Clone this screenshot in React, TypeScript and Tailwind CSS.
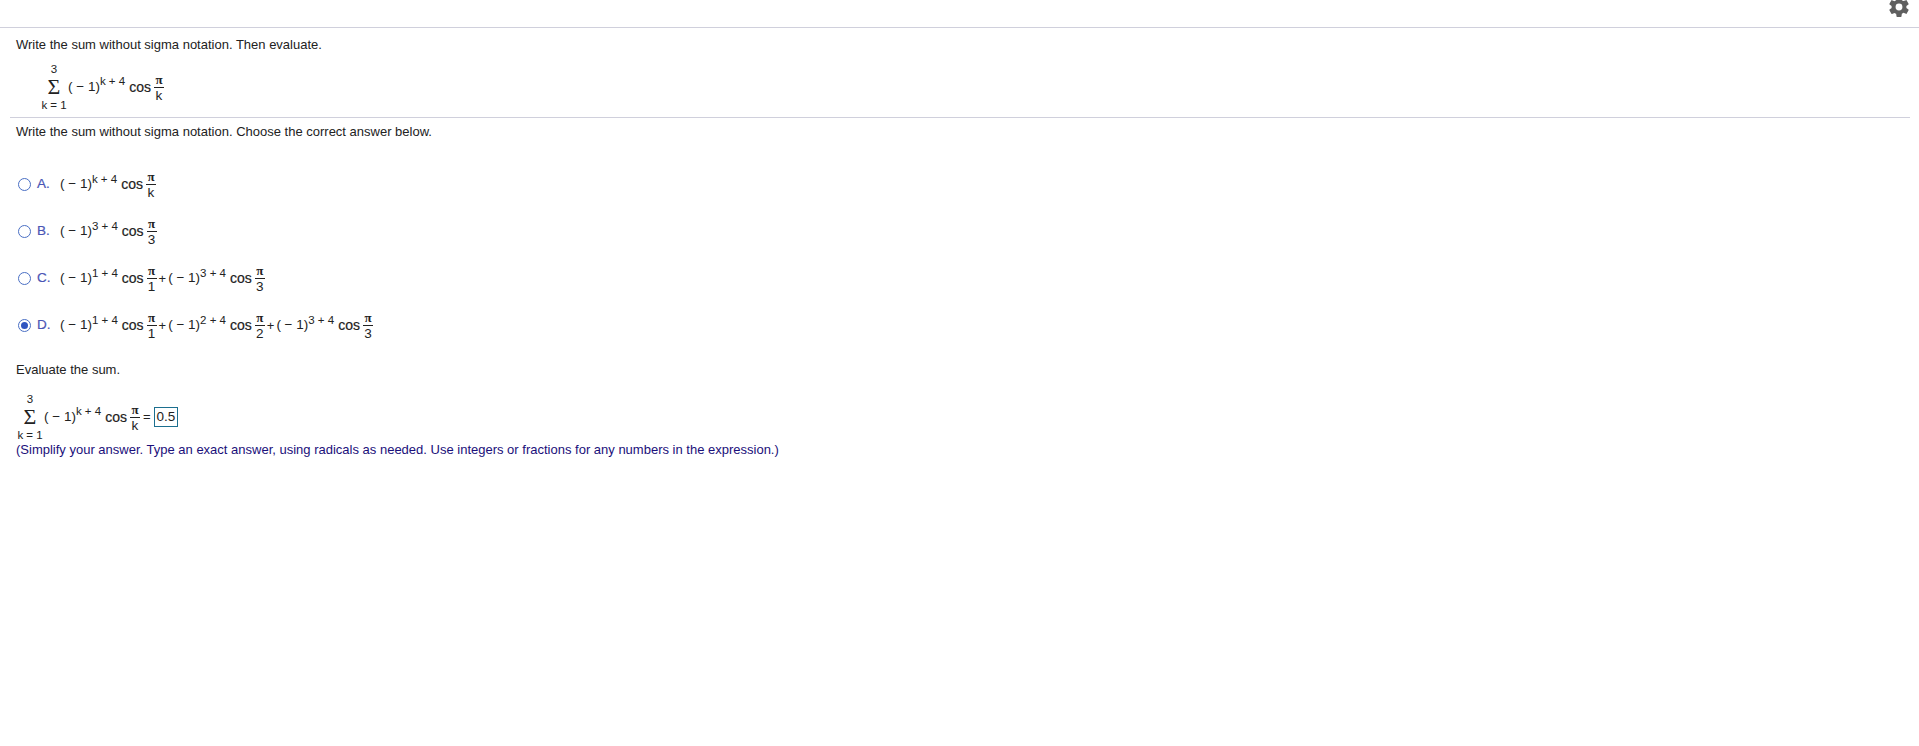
import type { ReactNode } from 'react';
import { IoSettingsSharp } from 'react-icons/io5';

const sans = 'font-["Liberation_Sans",Arial,sans-serif]';

function Frac({ bottom }: { bottom: string }) {
  return (
    <span className="inline-flex flex-col items-center w-[10px] ml-[3px]">
      <span className='font-["Liberation_Serif",serif] text-[13px] leading-[15px] font-bold'>π</span>
      <span className="w-full h-px bg-[#222]" />
      <span className="text-[13.5px] leading-[15px]">{bottom}</span>
    </span>
  );
}

function Term({ exp, bottom }: { exp: string; bottom: string }) {
  return (
    <span className="inline-flex items-center">
      <span className="text-[13.5px] whitespace-pre">( − 1)</span>
      <span className="text-[11.5px] leading-[14px] mb-[12px] whitespace-pre">{exp + ' + 4'}</span>
      <span className="text-[14px] ml-[4px] [-webkit-text-stroke:0.2px_#222]">cos</span>
      <Frac bottom={bottom} />
    </span>
  );
}

function Plus() {
  return <span className="text-[13px] mx-[2px]">+</span>;
}

function Sigma({ children }: { children: ReactNode }) {
  return (
    <div className="flex items-center">
      <div className="flex flex-col items-center w-[24px] text-[11.5px] leading-[14px]">
        <span>3</span>
        <span className='font-["Liberation_Serif",serif] text-[22px] leading-[22px]'>Σ</span>
        <span className="whitespace-pre">k = 1</span>
      </div>
      <div className="ml-[2px] flex items-center">{children}</div>
    </div>
  );
}

function Option({ letter, selected, children }: { letter: string; selected?: boolean; children: ReactNode }) {
  return (
    <div className="flex items-center h-[47px]">
      <span className="w-[13px] h-[13px] ml-[18px] rounded-full border-[1.5px] border-[#4a6fc4] flex items-center justify-center">
        {selected && <span className="w-[7px] h-[7px] rounded-full bg-[#2f55c0]" />}
      </span>
      <span className="ml-[6px] w-[23px] text-[13.5px] text-[#4a55b5] [-webkit-text-stroke:0.2px_#4a55b5]">{letter}.</span>
      {children}
    </div>
  );
}

export default function App() {
  return (
    <div className={`${sans} min-h-[746px] bg-white text-[#222] overflow-hidden`}>
      <div className="h-[28px] border-b border-[#d0d0dc] flex justify-end pr-[9px] overflow-hidden">
        <IoSettingsSharp className="w-[22px] h-[22px] -mt-[4px] text-[#5f5f5f]" />
      </div>

      <p className="ml-[16px] mt-[9px] text-[13px] leading-[16px]">Write the sum without sigma notation. Then evaluate.</p>
      <div className="ml-[42px] mt-[9px]">
        <Sigma>
          <Term exp="k" bottom="k" />
        </Sigma>
      </div>

      <div className="ml-[10px] mr-[9px] mt-[5px] border-b border-[#d0d0dc]" />
      <p className="ml-[16px] mt-[6px] text-[13px] leading-[16px]">Write the sum without sigma notation. Choose the correct answer below.</p>

      <div className="mt-[21px]">
        <Option letter="A">
          <Term exp="k" bottom="k" />
        </Option>
        <Option letter="B">
          <Term exp="3" bottom="3" />
        </Option>
        <Option letter="C">
          <Term exp="1" bottom="1" />
          <Plus />
          <Term exp="3" bottom="3" />
        </Option>
        <Option letter="D" selected>
          <Term exp="1" bottom="1" />
          <Plus />
          <Term exp="2" bottom="2" />
          <Plus />
          <Term exp="3" bottom="3" />
        </Option>
      </div>

      <p className="ml-[16px] mt-[13px] text-[13px] leading-[16px]">Evaluate the sum.</p>
      <div className="ml-[18px] mt-[14px]">
        <Sigma>
          <Term exp="k" bottom="k" />
          <span className="text-[13px] mx-[3px]">=</span>
          <span className="border border-[#1c6f8f] px-[2px] h-[20px] text-[13.5px] leading-[18px]">0.5</span>
        </Sigma>
      </div>
      <p className="ml-[16px] text-[13px] leading-[16px] text-[#1a0f7a]">
        (Simplify your answer. Type an exact answer, using radicals as needed. Use integers or fractions for any numbers in the expression.)
      </p>
    </div>
  );
}
